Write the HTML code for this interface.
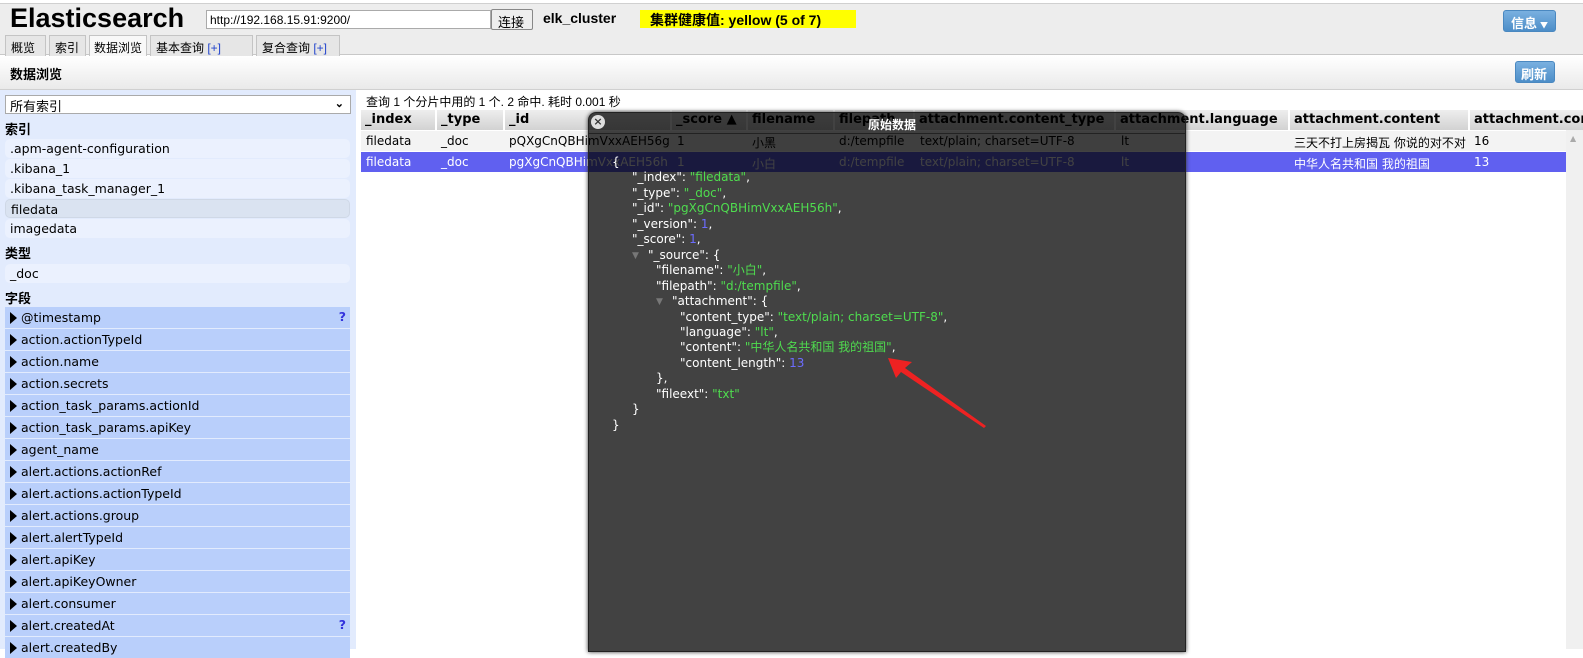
<!DOCTYPE html>
<html><head><meta charset="utf-8"><style>
*{box-sizing:border-box;margin:0;padding:0}
body{width:1583px;height:649px;overflow:hidden;background:#fff;font-family:"DejaVu Sans","Noto Sans CJK SC",sans-serif;font-size:12px;color:#000;position:relative}
.abs{position:absolute}
#hdr{left:0;top:3px;width:1583px;height:52px;background:#ededed;border-top:1px solid #d0d0d0;border-bottom:1px solid #c8c8c8}
.tab{position:absolute;top:35px;height:21px;border:1px solid #c4c4c4;border-bottom:none;background:#e6e6e6;font-size:12px;padding:3px 5px 0;font-family:"Liberation Sans","Noto Sans CJK SC",sans-serif;white-space:nowrap}
.tab.on{background:#f8f8f8;height:22px}
.tab b{color:#2244cc;font-weight:normal}
#sec{left:0;top:56px;width:1583px;height:34px;background:linear-gradient(#fff,#eaeaea);border-bottom:1px solid #d0d0d0}
#side{left:0;top:90px;width:356px;height:559px;background:#e2ebfd}
.lbl{position:absolute;left:5px;font-size:13px;font-family:"Liberation Sans","Noto Sans CJK SC",sans-serif;font-weight:bold}
.it{position:absolute;left:5px;width:345px;height:19px;background:#ebf1fe;border-radius:5px;padding:2px 0 0 5px;font-size:12.5px}
.fld{position:absolute;left:5px;width:345px;height:21px;background:#b9cffb;padding:3px 0 0 16px;font-size:12.5px}
.fld:before{content:"";position:absolute;left:5px;top:5px;border-left:7px solid #000;border-top:6px solid transparent;border-bottom:6px solid transparent}
.q{position:absolute;right:4px;top:2px;color:#33d;font-weight:bold}
.th{position:absolute;top:110px;height:20px;background:linear-gradient(#eee,#d2d2d2);border-right:2px solid #fff;font-weight:bold;font-size:13px;padding:2px 0 0 4px;white-space:nowrap;overflow:hidden}
.row{position:absolute;left:361px;width:1205px;height:20px}
.c{position:absolute;top:3px;white-space:nowrap}
#modal{left:588px;top:112px;width:598px;height:540px;background:rgba(0,0,0,.74);border:1px solid #222;border-radius:8px 8px 0 0;box-shadow:0 0 4px #333}
#json{left:612px;top:155px;font-family:"DejaVu Sans","Noto Sans CJK SC",sans-serif;font-size:12px;color:#fff;line-height:15.45px;white-space:pre}
#json div{position:relative}
.s{color:#4fdc4f}.n{color:#6c6cff}.t{position:absolute;color:#777;font-size:9px;margin-left:-16px;top:1px}
</style></head><body>
<div id="hdr" class="abs"></div>
<div class="abs" style="left:10px;top:3px;font-family:'Liberation Sans',sans-serif;font-weight:bold;font-size:27px">Elasticsearch</div>
<div class="abs" style="left:206px;top:10px;width:285px;height:19px;background:#fff;border:1px solid #aaa;font-family:'Liberation Sans',sans-serif;font-size:12px;padding:2px 3px">http://192.168.15.91:9200/</div>
<div class="abs" style="left:491px;top:9px;width:42px;height:21px;background:#eee;border:1px solid #888;border-radius:2px;font-size:13px;padding:2px 0 0 6px;font-family:'Noto Sans CJK SC',sans-serif">连接</div>
<div class="abs" style="left:543px;top:10px;font-family:'Liberation Sans',sans-serif;font-weight:bold;font-size:14px">elk_cluster</div>
<div class="abs" style="left:640px;top:10px;width:216px;height:18px;background:#ffff00;font-family:'Liberation Sans','Noto Sans CJK SC',sans-serif;font-weight:bold;font-size:14px;padding:0 0 0 10px">集群健康值: yellow (5 of 7)</div>
<div class="abs" style="left:1503px;top:10px;width:53px;height:22px;background:linear-gradient(#79b0e0,#4d8ec8);border:1px solid #4a88c0;border-radius:3px;color:#fff;font-weight:bold;font-size:13px;padding:2px 0 0 7px;font-family:'Noto Sans CJK SC',sans-serif">信息 <span style="font-size:8px">▼</span></div>
<div class="tab" style="left:5px;width:41px">概览</div>
<div class="tab" style="left:49px;width:37px">索引</div>
<div class="tab on" style="left:89px;width:58px;padding-left:4px">数据浏览</div>
<div class="tab" style="left:150px;width:103px">基本查询 <b>[+]</b></div>
<div class="tab" style="left:256px;width:84px">复合查询 <b>[+]</b></div>
<div id="sec" class="abs"></div>
<div class="abs" style="left:10px;top:64px;font-weight:bold;font-size:13px;font-family:'Noto Sans CJK SC',sans-serif">数据浏览</div>
<div class="abs" style="left:1515px;top:61px;width:40px;height:22px;background:linear-gradient(#79b0e0,#4d8ec8);border:1px solid #4a88c0;border-radius:3px;color:#fff;font-weight:bold;font-size:13px;padding:2px 0 0 5px;font-family:'Noto Sans CJK SC',sans-serif">刷新</div>
<div id="side" class="abs"></div>
<div class="abs" style="left:5px;top:95px;width:346px;height:19px;background:#fff;border:1px solid #aaa;font-size:13px;padding:0 4px;font-family:'Noto Sans CJK SC',sans-serif">所有索引<span style="position:absolute;right:6px;top:-1px;font-size:11px;font-weight:bold">⌄</span></div>
<div class="lbl" style="top:119px">索引</div>
<div class="it" style="top:139px">.apm-agent-configuration</div>
<div class="it" style="top:159px">.kibana_1</div>
<div class="it" style="top:179px">.kibana_task_manager_1</div>
<div class="it" style="top:199px;background:#dae3f1;border:1px solid #cfd8e6">filedata</div>
<div class="it" style="top:219px">imagedata</div>
<div class="lbl" style="top:243px">类型</div>
<div class="it" style="top:264px">_doc</div>
<div class="lbl" style="top:288px">字段</div>
<div class="fld" style="top:307px">@timestamp<span class="q">?</span></div>
<div class="fld" style="top:329px">action.actionTypeId</div>
<div class="fld" style="top:351px">action.name</div>
<div class="fld" style="top:373px">action.secrets</div>
<div class="fld" style="top:395px">action_task_params.actionId</div>
<div class="fld" style="top:417px">action_task_params.apiKey</div>
<div class="fld" style="top:439px">agent_name</div>
<div class="fld" style="top:461px">alert.actions.actionRef</div>
<div class="fld" style="top:483px">alert.actions.actionTypeId</div>
<div class="fld" style="top:505px">alert.actions.group</div>
<div class="fld" style="top:527px">alert.alertTypeId</div>
<div class="fld" style="top:549px">alert.apiKey</div>
<div class="fld" style="top:571px">alert.apiKeyOwner</div>
<div class="fld" style="top:593px">alert.consumer</div>
<div class="fld" style="top:615px">alert.createdAt<span class="q">?</span></div>
<div class="fld" style="top:637px">alert.createdBy</div>
<div class="abs" style="left:366px;top:93px;font-size:12px;font-family:'Liberation Sans','Noto Sans CJK SC',sans-serif">查询 1 个分片中用的 1 个. 2 命中. 耗时 0.001 秒</div>
<div class="th" style="left:361px;width:76px">_index</div>
<div class="th" style="left:437px;width:68px">_type</div>
<div class="th" style="left:505px;width:167px">_id</div>
<div class="th" style="left:672px;width:76px">_score ▲</div>
<div class="th" style="left:748px;width:87px">filename</div>
<div class="th" style="left:835px;width:80px">filepath</div>
<div class="th" style="left:915px;width:201px">attachment.content_type</div>
<div class="th" style="left:1116px;width:174px">attachment.language</div>
<div class="th" style="left:1290px;width:180px">attachment.content</div>
<div class="th" style="left:1470px;width:113px;border-right:none">attachment.content_length</div>
<div class="abs" style="left:1566px;top:130px;width:17px;height:519px;background:#f0f0f0"></div>
<div class="abs" style="left:1570px;top:134px;color:#aaa;font-size:8px">▲</div>
<div class="row" style="top:131px;background:#f3f3f3">
<span class="c" style="left:5px">filedata</span><span class="c" style="left:80px">_doc</span><span class="c" style="left:148px">pQXgCnQBHimVxxAEH56g</span><span class="c" style="left:316px">1</span><span class="c" style="left:391px">小黑</span><span class="c" style="left:478px">d:/tempfile</span><span class="c" style="left:559px">text/plain; charset=UTF-8</span><span class="c" style="left:760px">lt</span><span class="c" style="left:933px">三天不打上房揭瓦 你说的对不对</span><span class="c" style="left:1113px">16</span></div>
<div class="row" style="top:152px;background:#6060f0;color:#fff">
<span class="c" style="left:5px">filedata</span><span class="c" style="left:80px">_doc</span><span class="c" style="left:148px">pgXgCnQBHimVxxAEH56h</span><span class="c" style="left:316px">1</span><span class="c" style="left:391px">小白</span><span class="c" style="left:478px">d:/tempfile</span><span class="c" style="left:559px">text/plain; charset=UTF-8</span><span class="c" style="left:760px">lt</span><span class="c" style="left:933px">中华人名共和国 我的祖国</span><span class="c" style="left:1113px">13</span></div>
<div id="modal" class="abs"></div>
<div class="abs" style="left:589px;top:133px;width:596px;height:1px;background:#222"></div>
<div class="abs" style="left:591px;top:115px;width:14px;height:14px;border-radius:50%;background:#ddd;color:#333;font-size:11px;font-weight:bold;text-align:center;line-height:14px">×</div>
<div class="abs" style="left:868px;top:116px;color:#fff;font-weight:bold;font-size:12px;font-family:'Noto Sans CJK SC',sans-serif">原始数据</div>
<div id="json" class="abs"><div>{</div><div style="padding-left:20px">"_index": <span class="s">"filedata"</span>,</div><div style="padding-left:20px">"_type": <span class="s">"_doc"</span>,</div><div style="padding-left:20px">"_id": <span class="s">"pgXgCnQBHimVxxAEH56h"</span>,</div><div style="padding-left:20px">"_version": <span class="n">1</span>,</div><div style="padding-left:20px">"_score": <span class="n">1</span>,</div><div style="padding-left:36px"><span class="t">▼</span>"_source": {</div><div style="padding-left:44px">"filename": <span class="s">"小白"</span>,</div><div style="padding-left:44px">"filepath": <span class="s">"d:/tempfile"</span>,</div><div style="padding-left:60px"><span class="t">▼</span>"attachment": {</div><div style="padding-left:68px">"content_type": <span class="s">"text/plain; charset=UTF-8"</span>,</div><div style="padding-left:68px">"language": <span class="s">"lt"</span>,</div><div style="padding-left:68px">"content": <span class="s">"中华人名共和国 我的祖国"</span>,</div><div style="padding-left:68px">"content_length": <span class="n">13</span></div><div style="padding-left:44px">},</div><div style="padding-left:44px">"fileext": <span class="s">"txt"</span></div><div style="padding-left:20px">}</div><div>}</div></div>
<svg class="abs" style="left:0;top:0" width="1583" height="649"><polygon points="888,358 912,362 905,368 986,426 984,428 901,372 896,378" fill="#ee2222"/></svg>
</body></html>
